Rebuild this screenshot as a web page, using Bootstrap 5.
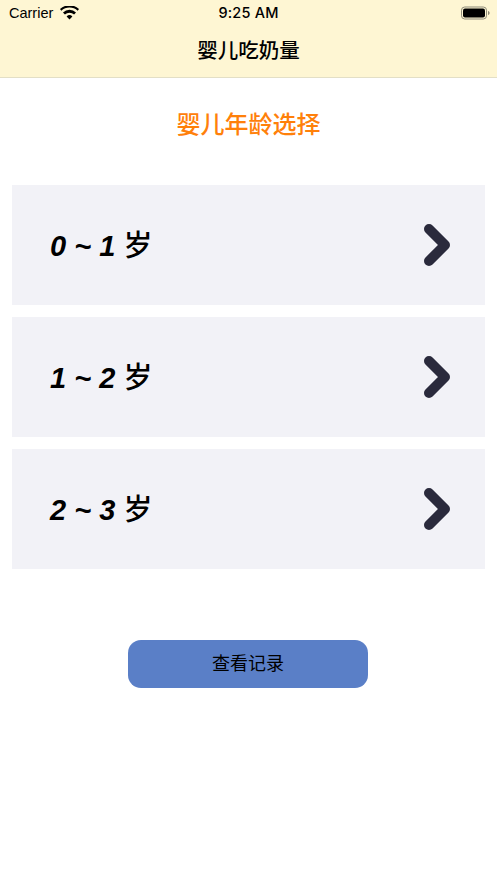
<!DOCTYPE html>
<html lang="zh">
<head>
<meta charset="utf-8">
<title>婴儿吃奶量</title>
<link href="https://cdn.jsdelivr.net/npm/bootstrap@5.3.0/dist/css/bootstrap.min.css" rel="stylesheet">
<style>
html, body { height: 100%; }
body { background: #fff; color: #000; font-family: "Liberation Sans", "Noto Sans CJK SC", sans-serif; overflow: hidden; }
.top-head { background: #fef6d3; border-bottom: 1px solid #e3dfc6; height: 78px; }
.status-row { height: 26px; padding: 0 7px 0 9px; font-size: 14.5px; line-height: 26px; position: relative; }
.status-left { gap: 7px; }
.status-time { position: absolute; left: 0; right: 0; text-align: center; font-size: 14.5px; font-weight: 500; font-family: "Inter", "Liberation Sans", sans-serif; letter-spacing: .2px; }
.nav-title { font-size: 20.5px; font-weight: 500; line-height: 50px; height: 51px; }
.age-heading { color: #ff800a; font-size: 24px; font-weight: 500; line-height: 32px; padding-top: 31px; margin: 0 0 44px; }
.age-list { padding: 0 12px; gap: 12px; }
.age-row { background: #f2f2f7; height: 120px; padding: 0 34px 0 38px; color: #000; text-decoration: none; }
.age-label { font-size: 29px; font-weight: 700; font-style: italic; line-height: 1; padding-top: 2px; }
.age-label span { font-style: normal; font-weight: 500; }
.rec-wrap { padding-top: 71px; }
.rec-btn { width: 240px; height: 48px; background: #5a7fc7; border: 0; border-radius: 13px; color: #000; font-size: 18px; padding: 0; margin-right: 1px; }
.rec-btn:hover { background: #5a7fc7; color: #000; }
</style>
</head>
<body>
<header class="top-head">
  <div class="status-row d-flex align-items-center justify-content-between">
    <div class="status-left d-flex align-items-center">
      <span>Carrier</span>
      <svg width="19" height="14" viewBox="0 0 19 14" aria-hidden="true"><path d="M9.500 13.600 6.600 10.400a4.200 4.200 0 0 1 5.800 0zM4.900 8.600 3 6.500a9.300 9.300 0 0 1 13 0l-1.900 2.100a6.600 6.600 0 0 0-9.200 0zM1.300 4.700 0 3.100a13.700 13.700 0 0 1 19 0l-1.300 1.600a11.900 11.900 0 0 0-16.400 0z" fill="#000"/></svg>
    </div>
    <div class="status-time">9:25 AM</div>
    <svg width="29" height="14" viewBox="0 0 29 14" aria-hidden="true"><rect x=".5" y="1" width="25" height="12" rx="3.200" fill="none" stroke="#8d8a78"/><rect x="2" y="2.500" width="22" height="9" rx="2" fill="#000"/><path d="M27 5v4c1-.2 1.600-1 1.600-2s-.6-1.800-1.600-2z" fill="#8d8a78"/></svg>
  </div>
  <div class="nav-title text-center">婴儿吃奶量</div>
</header>
<main>
  <h1 class="age-heading text-center">婴儿年龄选择</h1>
  <div class="age-list d-flex flex-column">
    <a class="age-row d-flex align-items-center justify-content-between" href="#">
      <div class="age-label">0 ~ 1 <span>岁</span></div>
      <svg width="28" height="44" viewBox="0 0 28 44" aria-hidden="true"><path d="M6 6 22 22 6 38" fill="none" stroke="#2a2a3c" stroke-width="10" stroke-linecap="round" stroke-linejoin="round"/></svg>
    </a>
    <a class="age-row d-flex align-items-center justify-content-between" href="#">
      <div class="age-label">1 ~ 2 <span>岁</span></div>
      <svg width="28" height="44" viewBox="0 0 28 44" aria-hidden="true"><path d="M6 6 22 22 6 38" fill="none" stroke="#2a2a3c" stroke-width="10" stroke-linecap="round" stroke-linejoin="round"/></svg>
    </a>
    <a class="age-row d-flex align-items-center justify-content-between" href="#">
      <div class="age-label">2 ~ 3 <span>岁</span></div>
      <svg width="28" height="44" viewBox="0 0 28 44" aria-hidden="true"><path d="M6 6 22 22 6 38" fill="none" stroke="#2a2a3c" stroke-width="10" stroke-linecap="round" stroke-linejoin="round"/></svg>
    </a>
  </div>
  <div class="rec-wrap d-flex justify-content-center">
    <button type="button" class="btn rec-btn">查看记录</button>
  </div>
</main>
<script src="https://cdn.jsdelivr.net/npm/bootstrap@5.3.0/dist/js/bootstrap.bundle.min.js"></script>
</body>
</html>
